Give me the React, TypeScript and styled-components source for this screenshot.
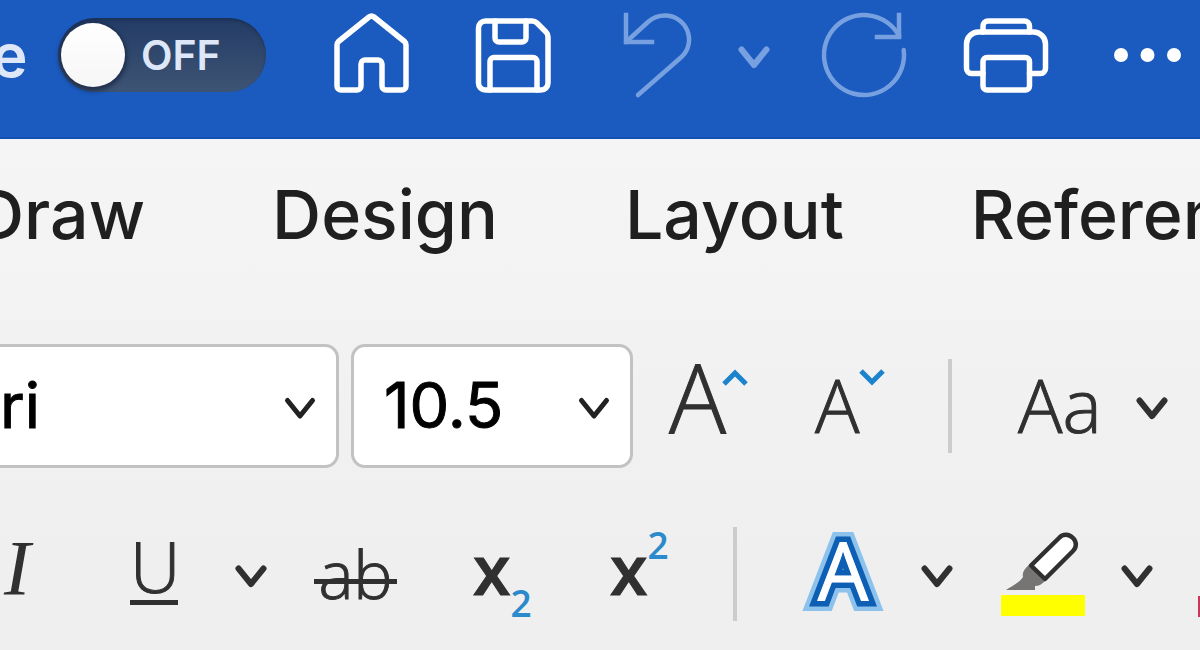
import React, { useState } from "react";
import styled, { createGlobalStyle } from "styled-components";

const GlobalStyle = createGlobalStyle`
  * { box-sizing: border-box; }
  body {
    margin: 0;
    background: #efefef;
    font-family: Inter, "Liberation Sans", sans-serif;
    overflow: hidden;
  }
  button, select { font: inherit; color: inherit; }
  svg { display: block; overflow: visible; }
`;

const Window = styled.main`
  min-height: 100vh;
  overflow: hidden;
  background: linear-gradient(#f5f5f5 138px, #f2f2f2 340px, #efefef 560px);
`;

const TitleBar = styled.header`
  display: flex;
  align-items: center;
  height: 139px;
  padding-bottom: 28px;
  background: #1b5abe;
  border-bottom: 2px solid #1450b4;
  color: #ffffff;
`;

const AutoSaveLabel = styled.span`
  width: 66px;
  margin-left: -8px;
  font-size: 60px;
  line-height: 72px;
  font-weight: 600;
  color: #dde7f8;
`;

const Switch = styled.button`
  display: flex;
  flex: none;
  align-items: center;
  gap: 16px;
  width: 208px;
  height: 74px;
  padding: 0 3px;
  border: 0;
  border-radius: 37px;
  background: linear-gradient(#233c66, #3e5474);
  box-shadow: inset 0 2px 3px rgba(20, 35, 70, 0.5);
  color: #dde7f8;
  font-size: 41px;
  font-weight: 600;
`;

const Knob = styled.span`
  width: 64px;
  height: 64px;
  border-radius: 50%;
  background: linear-gradient(#ffffff, #f6f6f6);
  box-shadow: 0 2px 4px 2px rgba(15, 25, 50, 0.6);
`;

const QuickGroup = styled.div<{ $before: number }>`
  display: flex;
  align-items: center;
  gap: 54px;
  margin-left: ${(p) => p.$before}px;
`;

const Split = styled.div<{ $gap: number; $before?: number }>`
  display: flex;
  flex: none;
  align-items: center;
  gap: ${(p) => p.$gap}px;
  margin-left: ${(p) => p.$before ?? 0}px;
`;

const IconButton = styled.button<{ $dim?: boolean }>`
  flex: none;
  padding: 0;
  border: 0;
  background: none;
  color: ${(p) => (p.$dim ? "#76a0e0" : "inherit")};
`;

const Tabs = styled.nav`
  display: flex;
  gap: 127px;
  margin-left: -25px;
  padding-top: 35px;
`;

const Tab = styled.a`
  flex: none;
  color: #1f1f1f;
  font-size: 68px;
  line-height: 80px;
  font-weight: 500;
  text-decoration: none;
`;

const Ribbon = styled.section`
  display: flex;
  flex-direction: column;
  gap: 58px;
  padding-top: 90px;
  color: #303030;
`;

const ToolRow = styled.div`
  display: flex;
  align-items: center;
`;

const Field = styled.label<{ $width: number; $before: number }>`
  display: grid;
  flex: none;
  align-items: center;
  justify-items: end;
  width: ${(p) => p.$width}px;
  margin-left: ${(p) => p.$before}px;
  color: #222222;

  > * { grid-area: 1 / 1; }
  > svg { margin-right: 23px; pointer-events: none; }
`;

const Select = styled.select<{ $indent: number }>`
  width: 100%;
  height: 124px;
  padding: 0 60px 3px ${(p) => p.$indent}px;
  appearance: none;
  border: 3px solid #c2c2c2;
  border-radius: 14px;
  background: #ffffff;
  color: #000000;
  font-size: 63px;
  -webkit-text-stroke: 1px #000000;
`;

const GlyphButton = styled.button<{ $width: number; $before: number }>`
  display: flex;
  flex: none;
  align-items: flex-start;
  width: ${(p) => p.$width}px;
  height: 96px;
  margin-left: ${(p) => p.$before}px;
  padding: 0;
  border: 0;
  background: none;
  text-align: left;
`;

const Glyph = styled.span<{ $size: number; $line: number }>`
  font-family: "Open Sans", "Noto Sans", sans-serif;
  font-size: ${(p) => p.$size}px;
  line-height: ${(p) => p.$line}px;
  font-weight: 300;
  -webkit-text-stroke: 1px currentColor;
`;

const ItalicGlyph = styled(Glyph)`
  padding-left: 4px;
  font-family: "Liberation Serif", serif;
  font-style: italic;
  -webkit-text-stroke: 0;
`;

const BoldGlyph = styled(Glyph)`
  font-weight: 600;
`;

const Underlined = styled(Glyph)`
  width: 48px;
  height: 79px;
  border-bottom: 5px solid #303030;
  text-align: center;
`;

const Struck = styled(Glyph)`
  position: relative;
  width: 83px;
  text-align: center;

  &::after {
    content: "";
    position: absolute;
    left: 0;
    right: 0;
    top: 53px;
    height: 5px;
    background: #303030;
  }
`;

const Script = styled(Glyph)<{ $low?: boolean }>`
  margin-top: ${(p) => (p.$low ? 58 : 0)}px;
  color: #2a8acb;
  font-weight: 600;
  -webkit-text-stroke: 0;
`;

const CaretSlot = styled.span<{ $overlap: number }>`
  margin-top: 11px;
  margin-left: -${(p) => p.$overlap}px;
`;

const Divider = styled.span<{ $before: number }>`
  flex: none;
  width: 4px;
  height: 94px;
  margin-left: ${(p) => p.$before}px;
  background: #cccccc;
`;

const FontColorSwatch = styled.span`
  flex: none;
  width: 84px;
  height: 21px;
  margin-top: 64px;
  margin-left: 45px;
  background: #c8375a;
`;

const Chevron = ({ weight = 6 }: { weight?: number }) => (
  <svg width="32" height="28" viewBox="0 0 32 28" fill="none" stroke="currentColor" strokeWidth={weight} strokeLinecap="round" strokeLinejoin="round" aria-hidden="true">
    <path d="M3.500 8.500 16 24 28.500 8.500" />
  </svg>
);

const Caret = ({ up }: { up?: boolean }) => (
  <svg width="26" height="17" viewBox="0 0 26 17" fill="none" stroke="#1c84cc" strokeWidth="5" aria-hidden="true">
    <path d={up ? "M2 15 13 4 24 15" : "M2 2 13 13 24 2"} />
  </svg>
);

const Icon = ({ children, weight = 5.5 }: { children: React.ReactNode; weight?: number }) => (
  <svg width="88" height="88" viewBox="0 0 88 88" fill="none" stroke="currentColor" strokeWidth={weight} strokeLinecap="round" strokeLinejoin="round" aria-hidden="true">
    {children}
  </svg>
);

const TextEffects = () => (
  <svg width="84" height="96" viewBox="0 0 84 96" strokeMiterlimit="2" aria-hidden="true">
    <defs>
      <text id="effect-letter" x="42" y="74" textAnchor="middle" fontFamily="Open Sans, sans-serif" fontSize="80" fontWeight="400">
        A
      </text>
    </defs>
    <use href="#effect-letter" fill="#8cc2ec" stroke="#8cc2ec" strokeWidth="21" />
    <use href="#effect-letter" fill="#0c5fb3" stroke="#0c5fb3" strokeWidth="12" />
    <use href="#effect-letter" fill="#ffffff" stroke="#ffffff" strokeWidth="1" />
  </svg>
);

const Highlighter = () => (
  <svg width="84" height="96" viewBox="0 0 84 96" aria-hidden="true">
    <path d="M28 39C23 43 21 47 22 51C18 57 11 60 5 64H34V60C38 60 41 58 44 55Z" fill="#777573" />
    <path d="M30 39.500 58 12C62 7.500 68 8 72 12C76 16 75.500 21.500 72 25L44 53Z" fill="#ffffff" stroke="#303030" strokeWidth="4.500" strokeLinejoin="round" />
    <rect y="69" width="84" height="21" fill="#ffff00" />
  </svg>
);

export default function App() {
  const [autoSave, setAutoSave] = useState(false);

  return (
    <>
      <GlobalStyle />
      <Window>
        <TitleBar>
          <AutoSaveLabel id="autosave">e</AutoSaveLabel>
          <Switch type="button" role="switch" aria-checked={autoSave} aria-labelledby="autosave" onClick={() => setAutoSave(!autoSave)}>
            <Knob />
            {autoSave ? "ON" : "OFF"}
          </Switch>
          <QuickGroup $before={62}>
            <IconButton type="button" aria-label="Home">
              <Icon>
                <path d="M13 79H29a4 4 0 0 0 4-4V53a4 4 0 0 1 4-4H50a4 4 0 0 1 4 4V75a4 4 0 0 0 4 4H74a4 4 0 0 0 4-4V34q0-2-1.500-3.500L46 6q-2.500-2-5 0L10.500 30.500Q9 32 9 34V75a4 4 0 0 0 4 4Z" />
              </Icon>
            </IconButton>
            <IconButton type="button" aria-label="Save">
              <Icon>
                <path d="M15.500 10H62q3 0 5 2L76 21q2 2 2 5V72a7 7 0 0 1-7 7H15.500a7 7 0 0 1-7-7V17a7 7 0 0 1 7-7Z" />
                <path d="M25 10V27a4 4 0 0 0 4 4H52a4 4 0 0 0 4-4V10" />
                <path d="M20 79V50.500a4 4 0 0 1 4-4H63a4 4 0 0 1 4 4V79" />
              </Icon>
            </IconButton>
            <Split $gap={38}>
              <IconButton type="button" aria-label="Undo" $dim>
                <Icon weight={4.5}>
                  <path d="M14 4V31H40" strokeLinecap="square" strokeLinejoin="miter" />
                  <path d="M14 31 36 11C41 6.500 47 4.500 53 4.500A24 24 0 0 1 70 45.500L26 84" />
                </Icon>
              </IconButton>
              <IconButton type="button" aria-label="Undo history" $dim>
                <Chevron />
              </IconButton>
            </Split>
          </QuickGroup>
          <QuickGroup $before={51}>
            <IconButton type="button" aria-label="Redo" $dim>
              <Icon weight={4.5}>
                <path d="M82.700 39.100A40 40 0 1 1 78.300 25.200" />
                <path d="M78 4V26H56" strokeLinecap="square" strokeLinejoin="miter" />
              </Icon>
            </IconButton>
            <IconButton type="button" aria-label="Print">
              <Icon>
                <path d="M20 62.500H8.500a5 5 0 0 1-5-5V33a12 12 0 0 1 12-12H70.500a12 12 0 0 1 12 12V57.500a5 5 0 0 1-5 5H66.500" />
                <path d="M20 21V15a5 5 0 0 1 5-5H61.500a5 5 0 0 1 5 5V21" />
                <rect x="20" y="46.500" width="46.500" height="32.500" rx="4" />
              </Icon>
            </IconButton>
            <IconButton type="button" aria-label="More">
              <svg width="88" height="88" viewBox="0 0 88 88" fill="currentColor" aria-hidden="true">
                <circle cx="16" cy="44" r="7" />
                <circle cx="42.500" cy="44" r="7" />
                <circle cx="69" cy="44" r="7" />
              </svg>
            </IconButton>
          </QuickGroup>
        </TitleBar>

        <Tabs aria-label="Ribbon tabs">
          <Tab href="#draw">Draw</Tab>
          <Tab href="#design">Design</Tab>
          <Tab href="#layout">Layout</Tab>
          <Tab href="#references">References</Tab>
        </Tabs>

        <Ribbon>
          <ToolRow>
            <Field $width={359} $before={-20}>
              <Select $indent={17} aria-label="Font">
                <option>ri</option>
              </Select>
              <Chevron weight={5} />
            </Field>
            <Field $width={282} $before={12}>
              <Select $indent={30} aria-label="Font size">
                <option>10.5</option>
              </Select>
              <Chevron weight={5} />
            </Field>
            <GlyphButton type="button" $width={82} $before={36} aria-label="Increase font size">
              <Glyph $size={95} $line={76}>A</Glyph>
              <CaretSlot $overlap={4}><Caret up /></CaretSlot>
            </GlyphButton>
            <GlyphButton type="button" $width={72} $before={64} aria-label="Decrease font size">
              <Glyph $size={74} $line={94}>A</Glyph>
              <CaretSlot $overlap={0}><Caret /></CaretSlot>
            </GlyphButton>
            <Divider $before={61} />
            <Split $gap={33} $before={66}>
              <GlyphButton type="button" $width={85} $before={0} aria-label="Change case">
                <Glyph $size={74} $line={94}>Aa</Glyph>
              </GlyphButton>
              <IconButton type="button" aria-label="Change case options">
                <Chevron />
              </IconButton>
            </Split>
          </ToolRow>

          <ToolRow>
            <GlyphButton type="button" $width={40} $before={0} aria-label="Italic">
              <ItalicGlyph $size={79} $line={84}>I</ItalicGlyph>
            </GlyphButton>
            <Split $gap={57} $before={90}>
              <GlyphButton type="button" $width={48} $before={0} aria-label="Underline">
                <Underlined $size={70} $line={80}>U</Underlined>
              </GlyphButton>
              <IconButton type="button" aria-label="Underline styles">
                <Chevron />
              </IconButton>
            </Split>
            <GlyphButton type="button" $width={83} $before={47} aria-label="Strikethrough">
              <Struck $size={66} $line={95}>ab</Struck>
            </GlyphButton>
            <GlyphButton type="button" $width={58} $before={76} aria-label="Subscript">
              <BoldGlyph $size={68} $line={85}>x</BoldGlyph>
              <Script $size={37} $line={37} $low>2</Script>
            </GlyphButton>
            <GlyphButton type="button" $width={58} $before={79} aria-label="Superscript">
              <BoldGlyph $size={68} $line={85}>x</BoldGlyph>
              <Script $size={37} $line={37}>2</Script>
            </GlyphButton>
            <Divider $before={65} />
            <Split $gap={36} $before={64}>
              <IconButton type="button" aria-label="Text effects">
                <TextEffects />
              </IconButton>
              <IconButton type="button" aria-label="Text effects options">
                <Chevron />
              </IconButton>
            </Split>
            <Split $gap={36} $before={48}>
              <IconButton type="button" aria-label="Highlight color">
                <Highlighter />
              </IconButton>
              <IconButton type="button" aria-label="Highlight color options">
                <Chevron />
              </IconButton>
            </Split>
            <FontColorSwatch />
          </ToolRow>
        </Ribbon>
      </Window>
    </>
  );
}
